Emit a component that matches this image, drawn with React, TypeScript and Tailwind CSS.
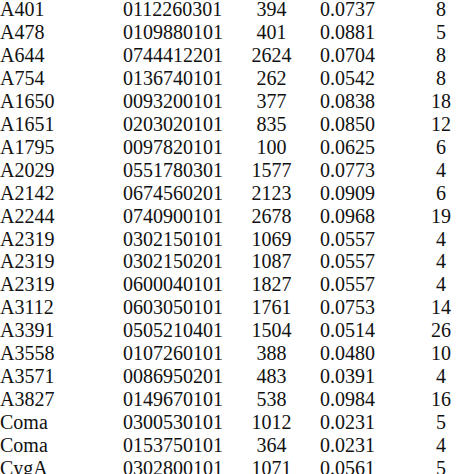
import React from "react";

const rows: [string, string, string, string, string][] = [
  ["A401", "0112260301", "394", "0.0737", "8"],
  ["A478", "0109880101", "401", "0.0881", "5"],
  ["A644", "0744412201", "2624", "0.0704", "8"],
  ["A754", "0136740101", "262", "0.0542", "8"],
  ["A1650", "0093200101", "377", "0.0838", "18"],
  ["A1651", "0203020101", "835", "0.0850", "12"],
  ["A1795", "0097820101", "100", "0.0625", "6"],
  ["A2029", "0551780301", "1577", "0.0773", "4"],
  ["A2142", "0674560201", "2123", "0.0909", "6"],
  ["A2244", "0740900101", "2678", "0.0968", "19"],
  ["A2319", "0302150101", "1069", "0.0557", "4"],
  ["A2319", "0302150201", "1087", "0.0557", "4"],
  ["A2319", "0600040101", "1827", "0.0557", "4"],
  ["A3112", "0603050101", "1761", "0.0753", "14"],
  ["A3391", "0505210401", "1504", "0.0514", "26"],
  ["A3558", "0107260101", "388", "0.0480", "10"],
  ["A3571", "0086950201", "483", "0.0391", "4"],
  ["A3827", "0149670101", "538", "0.0984", "16"],
  ["Coma", "0300530101", "1012", "0.0231", "5"],
  ["Coma", "0153750101", "364", "0.0231", "4"],
  ["CygA", "0302800101", "1071", "0.0561", "5"],
];

export default function App() {
  return (
    <div
      className="w-[474px] h-[474px] overflow-hidden bg-white text-[#111]"
      style={{ fontFamily: '"Liberation Serif", "Times New Roman", serif' }}
    >
      <div className="mt-[-2px] grid grid-cols-[123px_120px_57px_102px_78px] text-[20px] leading-[22.95px]">
        {rows.map((r, i) => (
          <React.Fragment key={i}>
            <div className="whitespace-nowrap">{r[0]}</div>
            <div className="whitespace-nowrap">{r[1]}</div>
            <div className="whitespace-nowrap text-center">{r[2]}</div>
            <div className="whitespace-nowrap pl-[20px]">{r[3]}</div>
            <div className="whitespace-nowrap text-center">{r[4]}</div>
          </React.Fragment>
        ))}
      </div>
    </div>
  );
}
